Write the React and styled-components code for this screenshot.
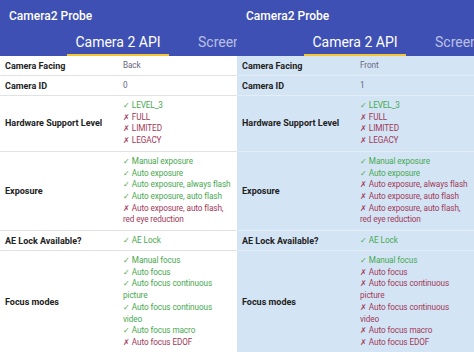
import React from "react";
import styled, { createGlobalStyle } from "styled-components";

const Global = createGlobalStyle`
  html, body {
    margin: 0;
    padding: 0;
    background: #ffffff;
    font-family: Roboto, "Liberation Sans", sans-serif;
  }
`;

const Screen = styled.div`
  display: flex;
  width: 474px;
  height: 352px;
  overflow: hidden;
`;

const Panel = styled.div`
  width: 237px;
  flex: none;
  overflow: hidden;
  background: ${(p) => (p.tinted ? "#d3e5f5" : "#ffffff")};
`;

const AppBar = styled.div`
  background: #3e50b4;
  height: 56px;
  display: flex;
  flex-direction: column;
`;

const Title = styled.div`
  color: #ffffff;
  font-size: 12px;
  font-weight: 500;
  padding: 9px 0 0 9px;
  height: 20px;
  line-height: 14px;
`;

const Tabs = styled.div`
  display: flex;
  padding-left: 67px;
  margin-top: auto;
  white-space: nowrap;
`;

const Tab = styled.div`
  width: 102px;
  flex: none;
  height: 26px;
  box-sizing: border-box;
  display: flex;
  align-items: center;
  justify-content: ${(p) => (p.active ? "center" : "flex-start")};
  padding-left: ${(p) => (p.active ? "0" : "29px")};
  font-size: 14px;
  color: ${(p) => (p.active ? "#ffffff" : "rgba(255,255,255,0.65)")};
  border-bottom: 2px solid ${(p) => (p.active ? "#f4c534" : "transparent")};
`;

const Row = styled.div`
  display: flex;
  align-items: center;
  border-bottom: 1px solid ${(p) => (p.tinted ? "#e4edf6" : "#e2e2e2")};
  padding: ${(p) => (p.multi ? "4px 0 4px" : "0")};
  min-height: ${(p) => (p.multi ? "0" : "19px")};
`;

const Label = styled.div`
  width: 123px;
  flex: none;
  box-sizing: border-box;
  padding-left: 5px;
  font-size: 9px;
  font-weight: 700;
  color: #222222;
`;

const Values = styled.div`
  width: 111px;
  flex: none;
  font-size: 8.2px;
  letter-spacing: -0.1px;
  line-height: 11.7px;
`;

const Plain = styled.div`
  color: #6a6680;
`;

const Item = styled.div`
  white-space: pre-line;
  color: ${(p) => (p.ok ? "#47a84f" : "#a23857")};
`;

const cameras = [
  {
    tinted: false,
    facing: "Back",
    id: "0",
    hw: [["LEVEL_3", 1], ["FULL", 0], ["LIMITED", 0], ["LEGACY", 0]],
    exposure: [
      ["Manual exposure", 1],
      ["Auto exposure", 1],
      ["Auto exposure, always flash", 1],
      ["Auto exposure, auto flash", 1],
      ["Auto exposure, auto flash,\nred eye reduction", 0],
    ],
    ae: [["AE Lock", 1]],
    focus: [
      ["Manual focus", 1],
      ["Auto focus", 1],
      ["Auto focus continuous\npicture", 1],
      ["Auto focus continuous\nvideo", 1],
      ["Auto focus macro", 1],
      ["Auto focus EDOF", 0],
    ],
  },
  {
    tinted: true,
    facing: "Front",
    id: "1",
    hw: [["LEVEL_3", 1], ["FULL", 0], ["LIMITED", 0], ["LEGACY", 0]],
    exposure: [
      ["Manual exposure", 1],
      ["Auto exposure", 1],
      ["Auto exposure, always flash", 0],
      ["Auto exposure, auto flash", 0],
      ["Auto exposure, auto flash,\nred eye reduction", 0],
    ],
    ae: [["AE Lock", 1]],
    focus: [
      ["Manual focus", 1],
      ["Auto focus", 0],
      ["Auto focus continuous\npicture", 0],
      ["Auto focus continuous\nvideo", 0],
      ["Auto focus macro", 0],
      ["Auto focus EDOF", 0],
    ],
  },
];

const List = ({ items }) =>
  items.map(([text, ok]) => (
    <Item key={text} ok={ok}>
      {ok ? "✓" : "✗"} {text}
    </Item>
  ));

const ProbePanel = ({ cam }) => (
  <Panel tinted={cam.tinted}>
    <AppBar>
      <Title>Camera2 Probe</Title>
      <Tabs>
        <Tab active>Camera 2 API</Tab>
        <Tab>Screen Info</Tab>
      </Tabs>
    </AppBar>
    <Row tinted={cam.tinted}>
      <Label>Camera Facing</Label>
      <Values>
        <Plain>{cam.facing}</Plain>
      </Values>
    </Row>
    <Row tinted={cam.tinted}>
      <Label>Camera ID</Label>
      <Values>
        <Plain>{cam.id}</Plain>
      </Values>
    </Row>
    <Row tinted={cam.tinted} multi>
      <Label>Hardware Support Level</Label>
      <Values>
        <List items={cam.hw} />
      </Values>
    </Row>
    <Row tinted={cam.tinted} multi>
      <Label>Exposure</Label>
      <Values>
        <List items={cam.exposure} />
      </Values>
    </Row>
    <Row tinted={cam.tinted}>
      <Label>AE Lock Available?</Label>
      <Values>
        <List items={cam.ae} />
      </Values>
    </Row>
    <Row tinted={cam.tinted} multi>
      <Label>Focus modes</Label>
      <Values>
        <List items={cam.focus} />
      </Values>
    </Row>
  </Panel>
);

const App = () => (
  <>
    <Global />
    <Screen>
      {cameras.map((cam) => (
        <ProbePanel key={cam.id} cam={cam} />
      ))}
    </Screen>
  </>
);

export default App;
